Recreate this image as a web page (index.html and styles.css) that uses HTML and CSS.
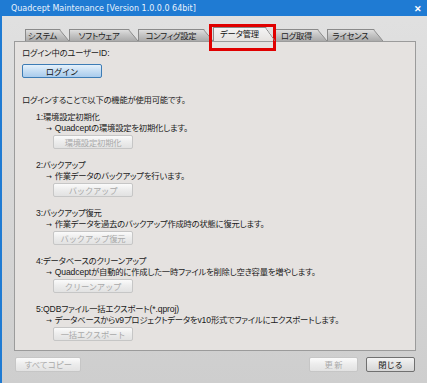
FILE: index.html
```html
<!DOCTYPE html>
<html lang="ja">

<head>
  <meta charset="utf-8" />
  <title>Quadcept Maintenance</title>
  <link rel="stylesheet" href="styles.css">
</head>

<body>
  <div class="window">
    <header class="titlebar">
      <span class="title">Quadcept Maintenance [Version 1.0.0.0 64bit]</span>
      <span class="close">✕</span>
    </header>

    <div class="client">
      <nav class="tabs">
        <div class="tab tab-system">システム</div>
        <div class="tab tab-software">ソフトウェア</div>
        <div class="tab tab-config">コンフィグ設定</div>
        <div class="tab tab-data active">データ管理<span class="highlight"></span></div>
        <div class="tab tab-log">ログ取得</div>
        <div class="tab tab-license">ライセンス</div>
      </nav>

      <section class="panel">
        <div class="line">ログイン中のユーザー<span class="en">ID:</span></div>
        <button class="btn btn-login">ログイン</button>

        <div class="line intro">ログインすることで以下の機能が使用可能です。</div>

        <div class="item">
          <div class="line"><span class="en">1:</span>環境設定初期化</div>
          <div class="line desc"><span class="arrow">→</span><span class="en">Quadcept</span>の環境設定を初期化します。</div>
          <button class="btn" disabled>環境設定初期化</button>
        </div>
        <div class="item">
          <div class="line"><span class="en">2:</span>バックアップ</div>
          <div class="line desc"><span class="arrow">→</span>作業データのバックアップを行います。</div>
          <button class="btn" disabled>バックアップ</button>
        </div>
        <div class="item">
          <div class="line"><span class="en">3:</span>バックアップ復元</div>
          <div class="line desc"><span class="arrow">→</span>作業データを過去のバックアップ作成時の状態に復元します。</div>
          <button class="btn" disabled>バックアップ復元</button>
        </div>
        <div class="item">
          <div class="line"><span class="en">4:</span>データベースのクリーンアップ</div>
          <div class="line desc"><span class="arrow">→</span><span class="en">Quadcept</span>が自動的に作成した一時ファイルを削除し空き容量を増やします。</div>
          <button class="btn" disabled>クリーンアップ</button>
        </div>
        <div class="item">
          <div class="line"><span class="en">5:QDB</span>ファイル一括エクスポート<span class="en">(*.qproj)</span></div>
          <div class="line desc"><span class="arrow">→</span>データベースから<span class="en">v9</span>プロジェクトデータを<span class="en">v10</span>形式でファイルにエクスポートします。</div>
          <button class="btn" disabled>一括エクスポート</button>
        </div>
      </section>

      <footer class="actions">
        <button class="btn btn-copy" disabled>すべてコピー</button>
        <span class="spacer"></span>
        <button class="btn btn-small" disabled>更 新</button>
        <button class="btn btn-small btn-close">閉じる</button>
      </footer>
    </div>
  </div>
</body>

</html>
```

FILE: styles.css
```css
html,
body {
  height: 100%;
  margin: 0;
  padding: 0;
  overflow: hidden;
  font-family: "Noto Sans CJK JP", sans-serif;
  font-feature-settings: "palt";
}

.window {
  display: flex;
  flex-direction: column;
  height: 383px;
  background: linear-gradient(#e1e1e1, #cecece);
}

.titlebar {
  display: flex;
  align-items: center;
  justify-content: space-between;
  height: 16px;
  padding: 0 5px 0 11px;
  background: #1f7bd3;
  color: #fff;
}

.title {
  font-family: "DejaVu Sans", sans-serif;
  font-size: 8px;
  color: #e8f2fc;
}

.close {
  font-size: 9px;
  font-weight: bold;
}

.client {
  flex: 1;
  display: flex;
  flex-direction: column;
  padding: 11px 11px 0 12px;
  border-left: 2px solid #1f7bd3;
}

/* tab strip */
.tabs {
  display: flex;
  align-items: flex-end;
  height: 14px;
  margin-left: 11px;
}

.tab {
  position: relative;
  z-index: 0;
  flex-shrink: 0;
  box-sizing: border-box;
  height: 12px;
  padding: 0 9px 0 0;
  font-size: 8.3px;
  letter-spacing: -0.2px;
  line-height: 12px;
  text-align: center;
  white-space: nowrap;
  color: #222;
}

/* tab face with slanted right edge */
.tab::before {
  content: '';
  position: absolute;
  inset: 0;
  z-index: -1;
  border-top: 1px solid #8a8a8a;
  border-left: 1px solid #8a8a8a;
  background: linear-gradient(#dedede, #c4c4c4 45%, #aaaaaa);
  clip-path: polygon(0 0, calc(100% - 9px) 0, 100% 100%, 0 100%);
}

.tab::after {
  content: '';
  position: absolute;
  top: 0;
  right: 0;
  width: 10px;
  height: 100%;
  background: linear-gradient(to top right, transparent calc(50% - 0.7px), #8a8a8a 50%, transparent calc(50% + 0.7px));
}

.tab-system { width: 44px; }
.tab-software { width: 69px; }
.tab-config { width: 75px; }
.tab-data { width: 62px; }
.tab-log { width: 52px; }
.tab-license { width: 56px; }

.tab.active {
  z-index: 1;
  height: 14px;
  line-height: 13px;
  color: #111;
}

.tab.active::before {
  background: linear-gradient(#f4f4f4, #e5e2e0);
}

.highlight {
  position: absolute;
  top: -3px;
  left: -4px;
  right: -1px;
  bottom: -10px;
  border: 3px solid #e00000;
}

/* main panel */
.panel {
  box-sizing: border-box;
  height: 310px;
  padding: 5px 7px;
  border: 1px solid #9b9b9b;
  background: #e5e2e0;
  font-size: 8.3px;
  letter-spacing: -0.2px;
  color: #1a1a1a;
}

.en {
  font-family: "Liberation Sans", sans-serif;
  font-size: 8.6px;
  letter-spacing: -0.1px;
}

.arrow {
  margin-right: 3px;
  font-family: "DejaVu Sans", sans-serif;
  font-size: 7px;
}

.line {
  height: 11px;
  line-height: 11px;
  white-space: nowrap;
}

.intro {
  margin-top: 16px;
}

.item {
  margin-top: 10px;
  padding-left: 14px;
}

.intro + .item {
  margin-top: 6px;
}

.desc {
  margin-left: 10px;
}

.btn {
  box-sizing: border-box;
  display: block;
  width: 80px;
  height: 14px;
  padding: 0;
  border: 1px solid #c6c6c6;
  border-radius: 2px;
  background: linear-gradient(#fbfbfb, #ececec 50%, #e2e2e2);
  font-family: inherit;
  font-size: 8.3px;
  letter-spacing: -0.2px;
  line-height: 12px;
  color: #a9a9a9;
}

.item .btn {
  margin: 2px 0 0 17px;
}

.btn-login {
  margin-top: 6px;
  border-color: #3d7cb5;
  background: linear-gradient(#e6f1fb, #c5ddf3 50%, #a9cbec);
  color: #111;
}

/* bottom buttons */
.actions {
  display: flex;
  gap: 8px;
  margin-top: 6px;
}

.actions .btn {
  height: 15px;
  line-height: 13px;
}

.btn-copy {
  width: 66px;
  margin-left: 1px;
}

.spacer {
  flex: 1;
}

.btn-small {
  width: 49px;
}

.btn-close {
  margin-right: 1px;
  border-color: #707070;
  background: linear-gradient(#f4f4f4, #e4e4e4 50%, #d6d6d6);
  color: #111;
}
```
